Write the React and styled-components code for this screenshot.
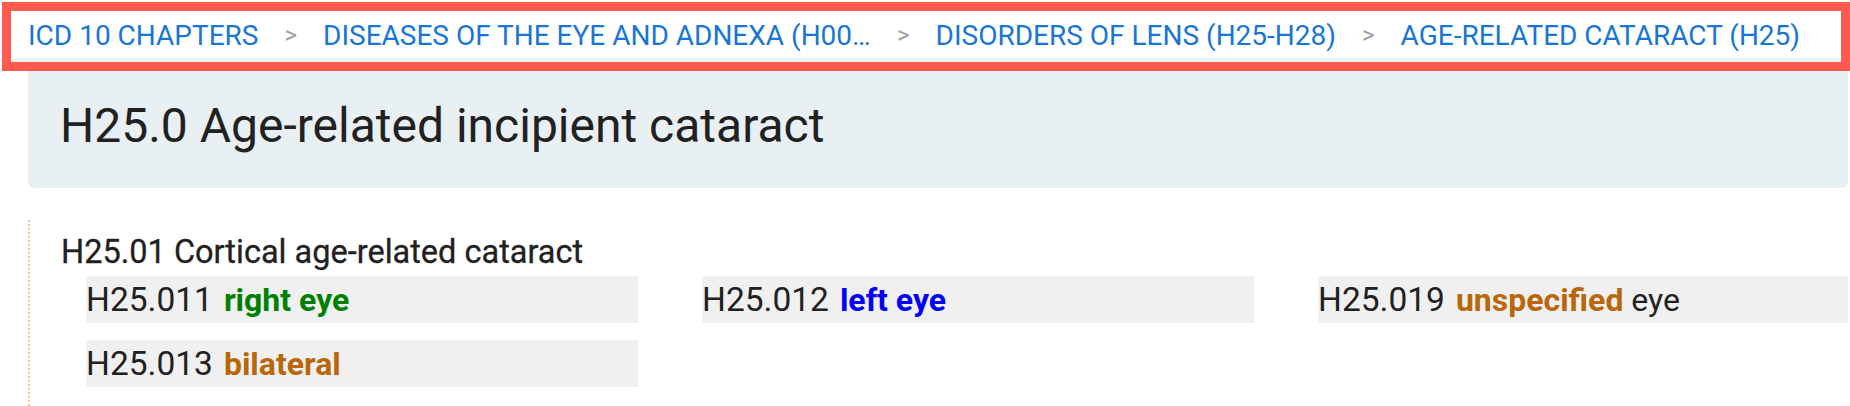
import React from "react";
import styled, { createGlobalStyle } from "styled-components";

const GlobalStyle = createGlobalStyle`
  body {
    margin: 0;
    background: #ffffff;
    font-family: Roboto, "Liberation Sans", Arial, sans-serif;
    overflow: hidden;
  }
`;

const Page = styled.div`
  width: 1850px;
  height: 406px;
  overflow: hidden;
`;

const Breadcrumbs = styled.nav`
  position: relative;
  z-index: 1;
  display: flex;
  align-items: center;
  box-sizing: border-box;
  height: 51px;
  margin: 11px 9px 0 11px;
  padding-left: 17px;
  background: #ffffff;
  border-bottom: 3px solid #e8f0f3;
  outline: 9px solid #ff5a4e;
  font-size: 28px;
  white-space: nowrap;
`;

const Crumb = styled.a`
  display: block;
  width: ${({ $width }) => ($width ? `${$width}px` : "auto")};
  color: #1976d2;
  text-decoration: none;
  text-transform: uppercase;
`;

const Separator = styled.span`
  color: #9e9e9e;
  margin: 0 26px;
  font-size: 24px;
`;

const TitleBox = styled.div`
  display: flex;
  align-items: center;
  height: 126px;
  margin: 0 2px 0 28px;
  padding-left: 32px;
  background: #e8f0f3;
  border-radius: 6px;
`;

const Title = styled.h1`
  margin: 0;
  font-size: 48px;
  font-weight: 400;
  color: #212121;
`;

const Section = styled.section`
  margin: 32px 0 0 28px;
  padding: 14px 0 0 31px;
  min-height: 200px;
  border-left: 2px dotted #f5c595;
`;

const SubTitle = styled.h2`
  margin: 0;
  font-size: 32.5px;
  line-height: 36px;
  font-weight: 400;
  color: #212121;
  -webkit-text-stroke: 0.3px #212121;
`;

const CodeGrid = styled.div`
  display: grid;
  grid-template-columns: 552px 552px 530px;
  column-gap: 64px;
  row-gap: 17px;
  margin-top: 6px;
  padding-left: 25px;
`;

const CodeRow = styled.div`
  display: flex;
  align-items: center;
  height: 47px;
  background: #f0f0f0;
  font-size: 32px;
  color: #212121;
  white-space: pre;
`;

const Code = styled.span`
  font-size: 33.5px;
  margin-right: 11px;
`;

const Desc = styled.span``;

const Label = styled.span`
  font-weight: 700;
  color: ${({ $tone }) => $tone};
`;

const crumbs = [
  { text: "ICD 10 Chapters" },
  { text: "Diseases of the eye and adnexa (H00\u2026", width: 548 },
  { text: "Disorders of lens (H25-H28)" },
  { text: "Age-related cataract (H25)" },
];

const codes = [
  { code: "H25.011", label: "right eye", tone: "#008000" },
  { code: "H25.012", label: "left eye", tone: "#0000ff" },
  { code: "H25.019", label: "unspecified", tone: "#b8680a", rest: " eye" },
  { code: "H25.013", label: "bilateral", tone: "#b8680a" },
];

export default function App() {
  return (
    <Page>
      <GlobalStyle />
      <Breadcrumbs>
        {crumbs.map((c, i) => (
          <React.Fragment key={c.text}>
            {i > 0 && <Separator>&gt;</Separator>}
            <Crumb href="#" $width={c.width}>{c.text}</Crumb>
          </React.Fragment>
        ))}
      </Breadcrumbs>
      <TitleBox>
        <Title>H25.0 Age-related incipient cataract</Title>
      </TitleBox>
      <Section>
        <SubTitle>H25.01 Cortical age-related cataract</SubTitle>
        <CodeGrid>
          {codes.map((c) => (
            <CodeRow key={c.code}>
              <Code>{c.code}</Code>
              <Desc>
                <Label $tone={c.tone}>{c.label}</Label>
                {c.rest}
              </Desc>
            </CodeRow>
          ))}
        </CodeGrid>
      </Section>
    </Page>
  );
}
